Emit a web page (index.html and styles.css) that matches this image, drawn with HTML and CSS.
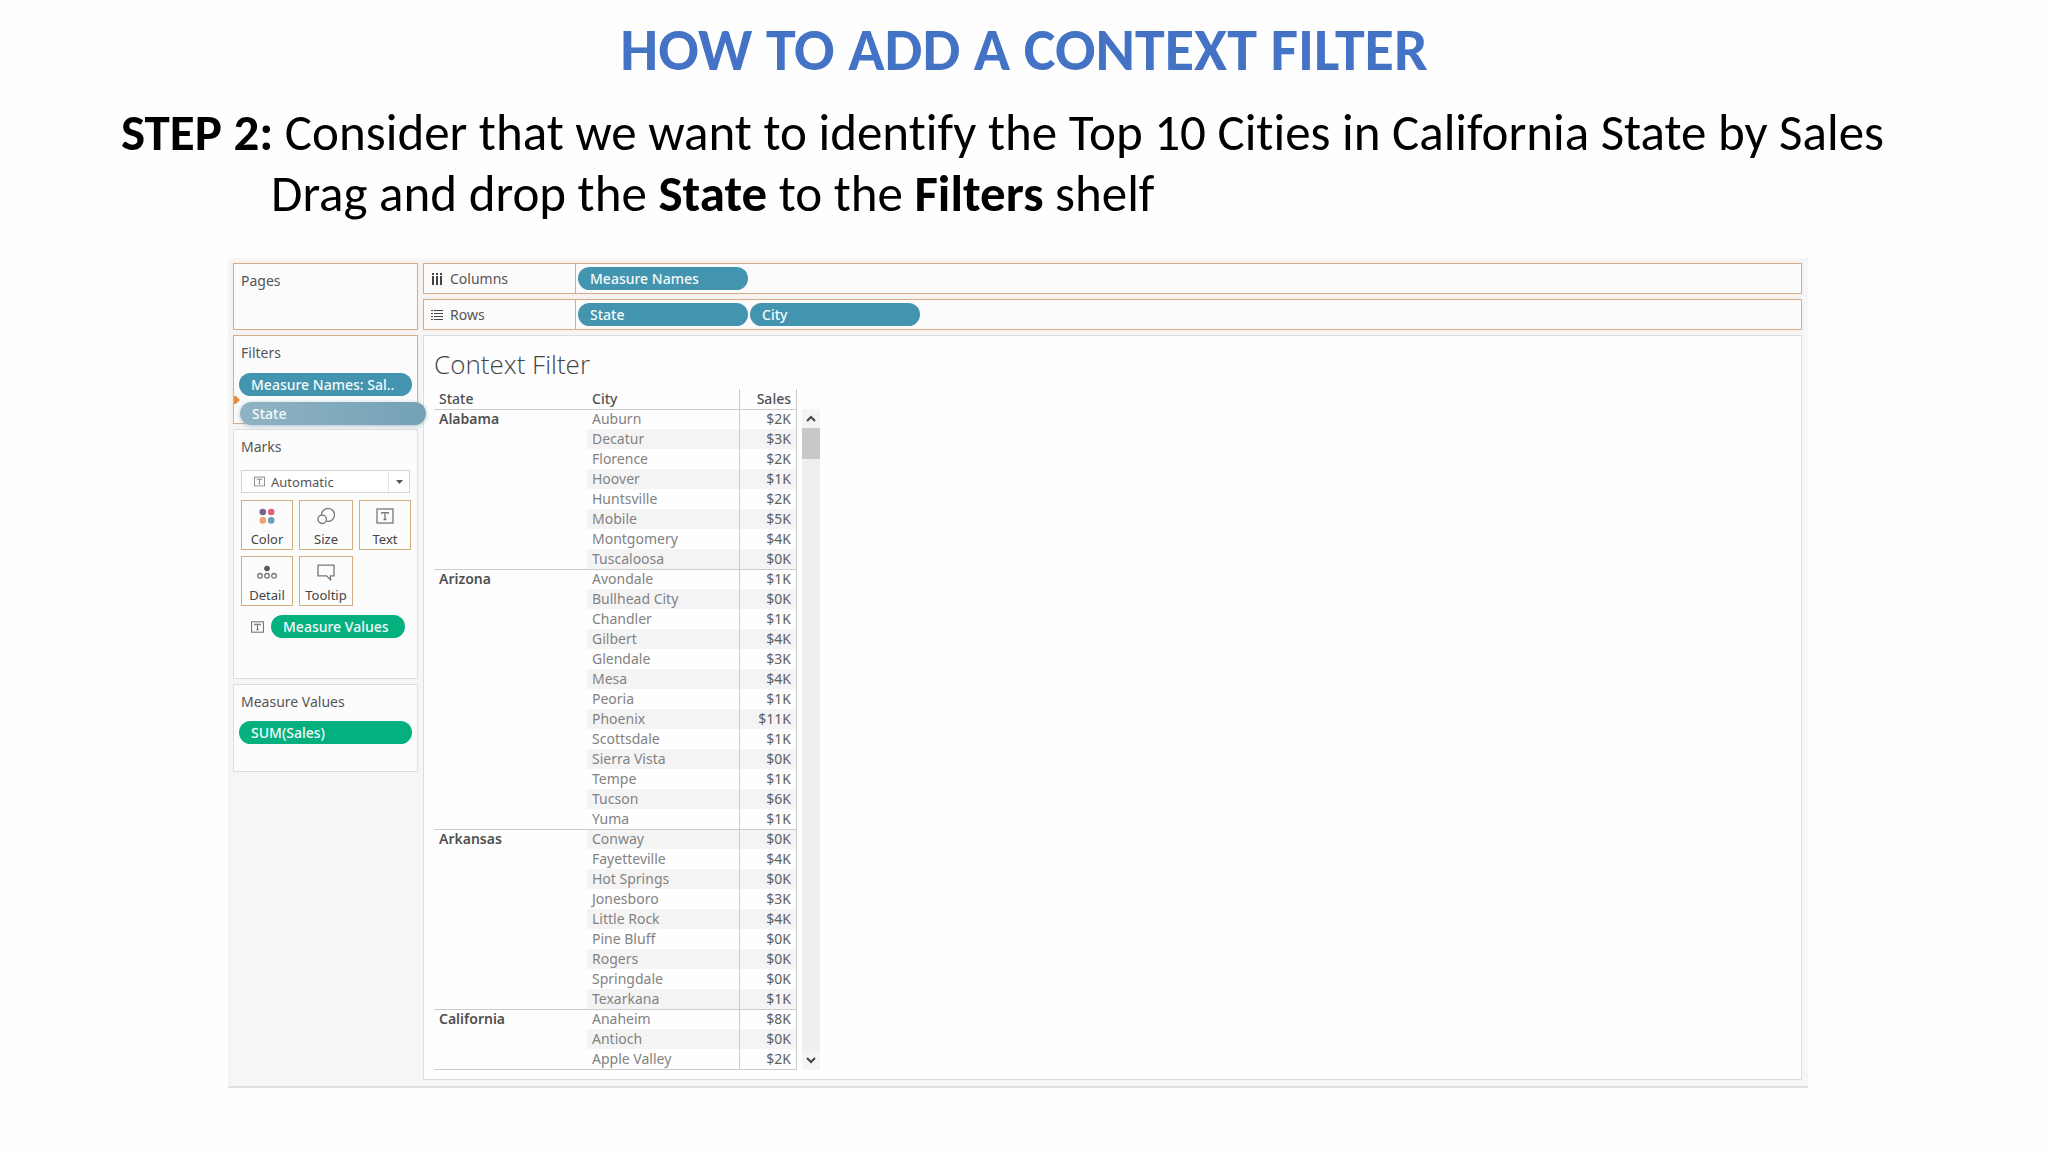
FILE: index.html
```html
<!DOCTYPE html>
<html lang="en">
<head>
<meta charset="utf-8">
<title>How to add a context filter</title>
<link rel="stylesheet" href="styles.css">
</head>
<body>
<header class="intro">
  <h1>HOW TO ADD A CONTEXT FILTER</h1>
  <p><b>STEP 2:</b> Consider that we want to identify the Top 10 Cities in California State by Sales</p>
  <p class="indent">Drag and drop the <b>State</b> to the <b>Filters</b> shelf</p>
</header>

<main class="workbook">
  <aside class="side">
    <section class="card drop pages"><h2>Pages</h2></section>
    <section class="card drop filters">
      <h2>Filters</h2>
      <button class="pill blue">Measure Names: Sal..</button>
      <svg class="marker" width="6" height="8" viewBox="0 0 6 8"><path d="M0 0h2l4 4-4 4H0z" fill="#e0913f"/></svg>
      <button class="pill dragged">State</button>
    </section>
    <section class="card marks">
      <h2><label for="mark">Marks</label></h2>
      <div class="picker">
        <svg class="ticon" width="11" height="11" viewBox="0 0 17 15"><rect x=".7" y=".7" width="15.6" height="13.6" fill="none" stroke="#888" stroke-width="1.4"/><path d="M5 5.500V4h7v1.500M8.500 4v7M7 11h3" fill="none" stroke="#777" stroke-width="1.300"/></svg>
        <select id="mark"><option>Automatic</option></select>
        <span class="arrow"><svg width="7" height="4" viewBox="0 0 7 4"><path d="M0 0h7L3.500 4z" fill="#555"/></svg></span>
      </div>
      <div class="tiles">
        <button><svg width="18" height="18" viewBox="0 0 18 18"><circle cx="4.800" cy="5" r="3.300" fill="#7b6488"/><circle cx="13.200" cy="5" r="3.300" fill="#e0627a"/><circle cx="4.800" cy="13.400" r="3.300" fill="#f0a173"/><circle cx="13.200" cy="13.400" r="3.300" fill="#6f9db5"/></svg>Color</button>
        <button><svg width="18" height="18" viewBox="0 0 18 18" fill="none" stroke="#777" stroke-width="1.300"><path d="M4.500 8A6.500 6.500 0 1 1 9.600 14.200"/><circle cx="5.200" cy="12.300" r="4.200"/></svg>Size</button>
        <button><svg width="18" height="18" viewBox="0 0 18 18"><rect x="1" y="2" width="16" height="14" fill="none" stroke="#777" stroke-width="1.300"/><path d="M5.800 7V5.600h6.400V7M9 5.600v6.900M7.500 12.500h3" fill="none" stroke="#777" stroke-width="1.300"/></svg>Text</button>
        <button><svg width="20" height="18" viewBox="0 0 20 18"><circle cx="10" cy="5.500" r="2.800" fill="#555"/><g fill="none" stroke="#777" stroke-width="1.300"><circle cx="3" cy="12.800" r="2.300"/><circle cx="10" cy="12.800" r="2.300"/><circle cx="17" cy="12.800" r="2.300"/></g></svg>Detail</button>
        <button><svg width="18" height="18" viewBox="0 0 18 18"><path d="M1 2.200h16v10.600h-3.500v4L9.500 12.800H1z" fill="none" stroke="#777" stroke-width="1.300"/></svg>Tooltip</button>
      </div>
      <div class="assigned">
        <svg width="13" height="12" viewBox="0 0 17 15"><rect x=".7" y=".7" width="15.600" height="13.600" fill="none" stroke="#777" stroke-width="1.400"/><path d="M5 5.500V4h7v1.500M8.500 4v7M7 11h3" fill="none" stroke="#666" stroke-width="1.400"/></svg>
        <button class="pill green">Measure Values</button>
      </div>
    </section>
    <section class="card values">
      <h2>Measure Values</h2>
      <button class="pill green">SUM(Sales)</button>
    </section>
  </aside>

  <div class="content">
    <section class="shelf drop">
      <h2><svg width="12" height="12" viewBox="0 0 12 12" fill="#444"><path d="M1 0h2v2H1zM5 0h2v2H5zM9 0h2v2H9zM1 3h2v9H1zM5 3h2v9H5zM9 3h2v9H9z"/></svg>Columns</h2>
      <div class="pills"><button class="pill blue">Measure Names</button></div>
    </section>
    <section class="shelf drop">
      <h2><svg width="12" height="12" viewBox="0 0 12 12" fill="#444"><path d="M0 1h2v1H0zM3 1h9v1H3zM0 4h2v1H0zM3 4h9v1H3zM0 7h2v1H0zM3 7h9v1H3zM0 10h2v1H0zM3 10h9v1H3z"/></svg>Rows</h2>
      <div class="pills"><button class="pill blue">State</button><button class="pill blue">City</button></div>
    </section>
    <section class="view">
      <h3>Context Filter</h3>
      <div class="grid">
        <table>
          <thead><tr><th>State</th><th>City</th><th>Sales</th></tr></thead>
          <tbody>
            <tr><th rowspan="8">Alabama</th><td>Auburn</td><td>$2K</td></tr>
            <tr><td>Decatur</td><td>$3K</td></tr>
            <tr><td>Florence</td><td>$2K</td></tr>
            <tr><td>Hoover</td><td>$1K</td></tr>
            <tr><td>Huntsville</td><td>$2K</td></tr>
            <tr><td>Mobile</td><td>$5K</td></tr>
            <tr><td>Montgomery</td><td>$4K</td></tr>
            <tr><td>Tuscaloosa</td><td>$0K</td></tr>
          </tbody>
          <tbody>
            <tr><th rowspan="13">Arizona</th><td>Avondale</td><td>$1K</td></tr>
            <tr><td>Bullhead City</td><td>$0K</td></tr>
            <tr><td>Chandler</td><td>$1K</td></tr>
            <tr><td>Gilbert</td><td>$4K</td></tr>
            <tr><td>Glendale</td><td>$3K</td></tr>
            <tr><td>Mesa</td><td>$4K</td></tr>
            <tr><td>Peoria</td><td>$1K</td></tr>
            <tr><td>Phoenix</td><td>$11K</td></tr>
            <tr><td>Scottsdale</td><td>$1K</td></tr>
            <tr><td>Sierra Vista</td><td>$0K</td></tr>
            <tr><td>Tempe</td><td>$1K</td></tr>
            <tr><td>Tucson</td><td>$6K</td></tr>
            <tr><td>Yuma</td><td>$1K</td></tr>
          </tbody>
          <tbody class="shaded-first">
            <tr><th rowspan="9">Arkansas</th><td>Conway</td><td>$0K</td></tr>
            <tr><td>Fayetteville</td><td>$4K</td></tr>
            <tr><td>Hot Springs</td><td>$0K</td></tr>
            <tr><td>Jonesboro</td><td>$3K</td></tr>
            <tr><td>Little Rock</td><td>$4K</td></tr>
            <tr><td>Pine Bluff</td><td>$0K</td></tr>
            <tr><td>Rogers</td><td>$0K</td></tr>
            <tr><td>Springdale</td><td>$0K</td></tr>
            <tr><td>Texarkana</td><td>$1K</td></tr>
          </tbody>
          <tbody>
            <tr><th rowspan="3">California</th><td>Anaheim</td><td>$8K</td></tr>
            <tr><td>Antioch</td><td>$0K</td></tr>
            <tr><td>Apple Valley</td><td>$2K</td></tr>
          </tbody>
        </table>
        <div class="scroll">
          <button aria-label="Scroll up"><svg width="10" height="7" viewBox="0 0 10 7"><path d="M1 6l4-4 4 4" fill="none" stroke="#444" stroke-width="2"/></svg></button>
          <div class="thumb"></div>
          <button class="down" aria-label="Scroll down"><svg width="10" height="7" viewBox="0 0 10 7"><path d="M1 1l4 4 4-4" fill="none" stroke="#444" stroke-width="2"/></svg></button>
        </div>
      </div>
    </section>
  </div>
</main>
</body>
</html>
```
FILE: styles.css
```css
* { box-sizing: border-box; }
body { margin: 0; background: #fefefe; font-family: "Noto Sans", "Open Sans", sans-serif; color: #555; }
h1, h2, h3, p { margin: 0; font-weight: 400; }
button, select { font: inherit; color: inherit; border: 0; padding: 0; background: none; }

.intro { font-family: Carlito, Calibri, Lato, sans-serif; font-variant-ligatures: none; color: #000; padding: 15px 121px 0; }
.intro h1 { font-size: 60px; line-height: 70px; font-weight: 700; color: #4472c4; text-align: center; }
.intro p { font-size: 51px; line-height: 61px; white-space: nowrap; }
.intro h1 + p { margin-top: 17px; }
.intro .indent { padding-left: 150px; }

.workbook { display: flex; gap: 5px; margin: 34px 240px 0 228px; padding: 5px 6px 6px 5px; background: #f6f6f7; border-bottom: 2px solid #dfdee1; }
.side { width: 185px; display: flex; flex-direction: column; gap: 5px; }
.card { border: 1px solid #dcdddd; background: #fcfcfc; position: relative; padding: 0 5px; }
.drop { border-color: #d2ae8c; background: #fbfbfc; box-shadow: 0 0 3px #fbe8d2; }
.card h2 { font-size: 14px; line-height: 20px; padding: 7px 2px 9px; }
.pages { height: 67px; }
.filters { height: 89px; }
.filters h2 { padding-bottom: 10px; }
.marks { height: 250px; }
.values { height: 88px; }

.pill { display: block; width: 100%; height: 23px; border-radius: 12px; padding: 0 12px; font-size: 14px; line-height: 23px; font-weight: 500; text-align: left; color: #f4fafb; white-space: nowrap; }
.blue { background: #4394ae; }
.green { background: #05b07f; }
.marker { position: absolute; left: 0; top: 60px; }
.dragged { position: absolute; left: 6px; top: 66px; width: 186px; background: linear-gradient(90deg, #8fb4c4, #74a1b5); box-shadow: 0 1px 4px #7aa6b899; z-index: 2; }

.picker { display: flex; align-items: center; height: 23px; margin: 4px 2px 7px; padding-left: 12px; border: 1px solid #d4d4d4; background: #fff; }
.picker select { flex: 1; min-width: 0; appearance: none; font-size: 13px; line-height: 20px; padding-left: 6px; }
.arrow { width: 21px; height: 21px; border-left: 1px solid #e6e6e6; display: flex; align-items: center; justify-content: center; }
.tiles { display: grid; grid-template-columns: 52px 54px 52px; gap: 6px; margin: 0 2px; }
.tiles button { height: 50px; border: 1px solid #d2ae84; background: #fcfcfc; display: flex; flex-direction: column; align-items: center; justify-content: space-between; padding: 6px 0 1px; font-size: 13px; line-height: 18px; color: #444; }
.assigned { display: flex; align-items: center; gap: 7px; margin: 9px 7px 0 12px; }
.assigned svg { flex: none; }

.content { flex: 1; min-width: 0; display: flex; flex-direction: column; gap: 5px; }
.shelf { display: flex; height: 31px; border: 1px solid #d2ae8c; }
.shelf h2 { width: 152px; display: flex; align-items: center; gap: 7px; padding-left: 7px; font-size: 14px; border-right: 1px solid #d2ae8c; }
.pills { display: flex; gap: 2px; padding: 3px 2px; }
.pills .pill { width: 170px; }

.view { border: 1px solid #dcdde0; background: #fefefe; padding: 12px 10px 9px; }
.view h3 { font-family: "Open Sans", "Noto Sans", sans-serif; font-weight: 300; font-size: 26px; line-height: 32px; color: #444; margin-bottom: 9px; }
.grid { display: flex; gap: 5px; }
table { width: 363px; table-layout: fixed; border-collapse: separate; border-spacing: 0; border-bottom: 1px solid #ccc; font-size: 14px; line-height: 19px; }
th, td { height: 20px; padding: 0 5px; text-align: left; vertical-align: top; font-weight: 400; }
th { font-weight: 600; color: #505050; }
thead th { font-weight: 500; }
thead th:nth-child(1) { width: 153px; }
thead th:nth-child(2) { width: 152px; }
td { color: #828282; }
td:last-child, thead th:last-child { text-align: right; border-left: 1px solid #ccc; border-right: 1px solid #ccc; }
td:last-child { color: #606060; }
tbody tr:first-child > * { border-top: 1px solid #ccc; line-height: 18px; }
tbody:not(.shaded-first) tr:nth-child(even) td,
.shaded-first tr:nth-child(odd) td { background: #f5f4f5; }
.scroll { width: 18px; margin-top: 20px; background: #efeef0; display: flex; flex-direction: column; }
.scroll button { height: 19px; background: #f4f4f5; display: flex; align-items: center; justify-content: center; }
.thumb { height: 31px; background: #c8c7c9; }
.scroll .down { margin-top: auto; }
```
